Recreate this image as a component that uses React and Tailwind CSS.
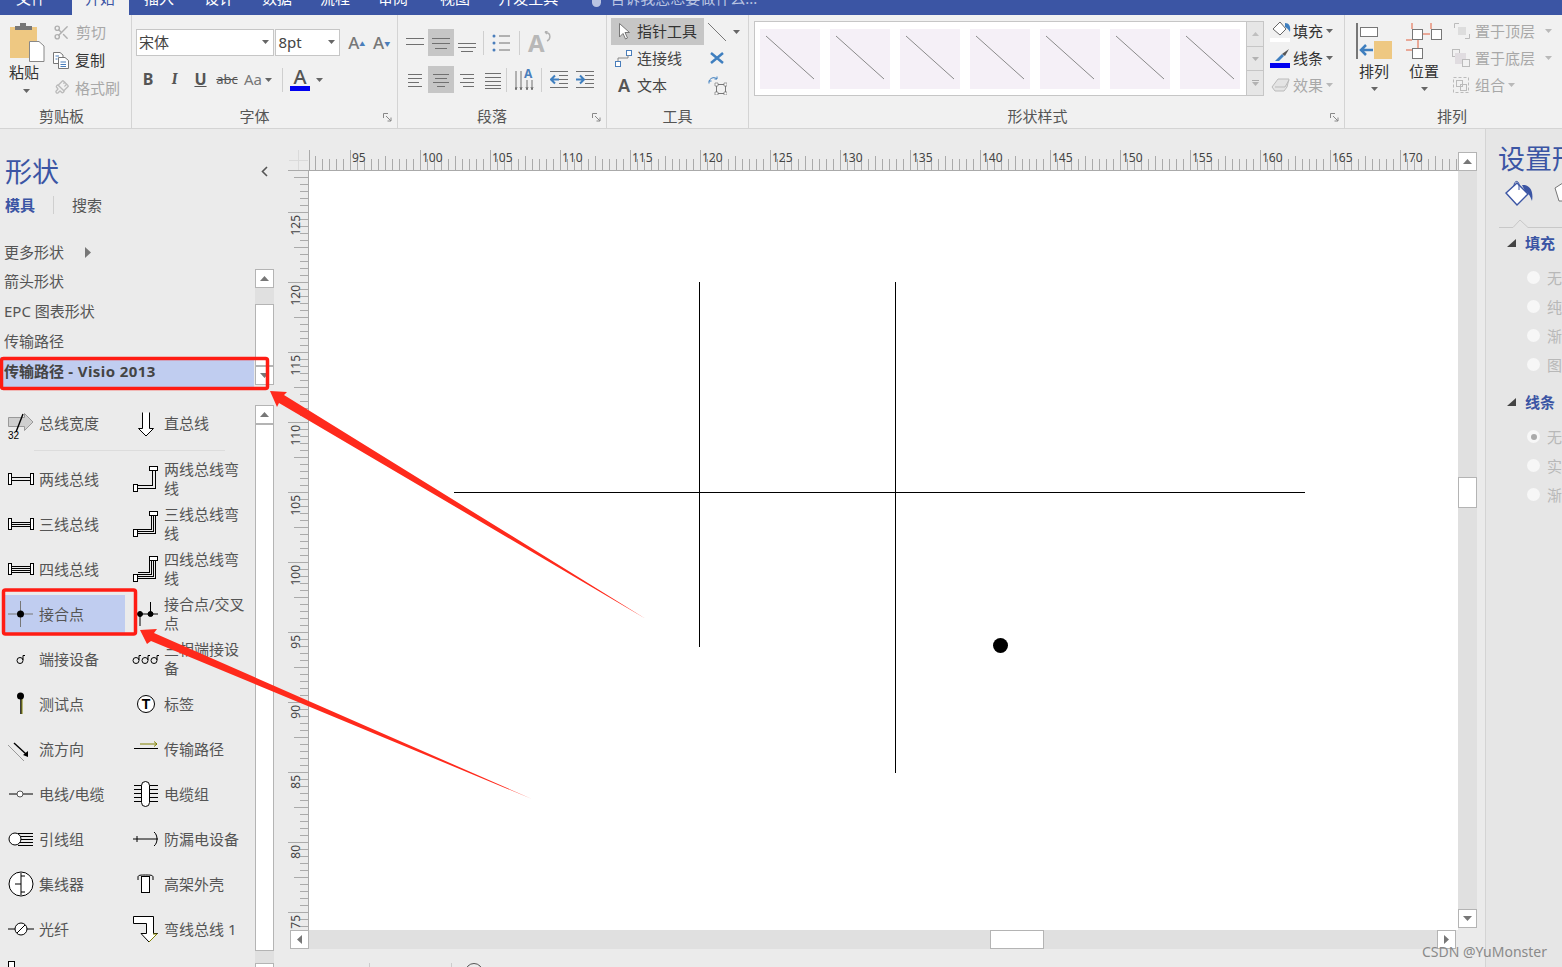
import { Scissors, PaintbrushVertical } from "lucide-react"

const tabs = [
  ["文件", "ml-[16px]"],
  ["开始", "ml-[26px] pl-[13px] pr-[14px] bg-[#f1f1f1] text-[#3b55a4]"],
  ["插入", "ml-[15px]"],
  ["设计", "ml-[30px]"],
  ["数据", "ml-[28px]"],
  ["流程", "ml-[28px]"],
  ["审阅", "ml-[28px]"],
  ["视图", "ml-[32px]"],
  ["开发工具", "ml-[28px]"],
]

const Caret = ({ className = "" }) => (
  <svg width="7" height="4" viewBox="0 0 7 4" className={className}>
    <path d="M0 0H7L3.5 4Z" fill="#666" />
  </svg>
)

const Launcher = () => (
  <svg width="9" height="9" viewBox="0 0 9 9" fill="none" stroke="#888">
    <path d="M0.5 5V0.5H5M3 3L8 8M8 4.5V8H4.5" />
  </svg>
)

// Ribbon group with its caption along the bottom
const Group = ({ w, label, labelCls = "", launcher, children }) => (
  <div className={`${w} h-full flex flex-col border-r border-[#d4d4d4] shrink-0`}>
    <div className="h-[84px]">{children}</div>
    <div className="mt-[5px] h-[24px] grid grid-cols-[1fr_auto_1fr] items-center text-[#555]">
      <div />
      <div className={labelCls}>{label}</div>
      <div className="flex justify-end pr-[5px] pt-[3px]">{launcher && <Launcher />}</div>
    </div>
  </div>
)

const Lines = ({ d, w = 18, h = 20, blue }) => (
  <svg width={w} height={h} viewBox={`0 0 ${w} ${h}`} fill="none" shapeRendering="crispEdges">
    <path d={d} stroke="#707070" />
    {blue && <path d={blue} stroke="#3f7fbf" strokeWidth="2" shapeRendering="auto" />}
  </svg>
)

const Cell = ({ w, on, children }) => (
  <div className={`${w} h-[27px] flex items-center justify-center shrink-0 ${on ? "bg-[#c6c6c6]" : ""}`}>{children}</div>
)

const VDiv = ({ m }) => <div className={`w-px h-[24px] bg-[#cfcfcf] shrink-0 ${m}`} />

const ClipboardGroup = () => (
  <Group w="w-[132px]" label="剪贴板" labelCls="mr-[8px]">
    <div className="flex pt-[3px]">
      <div className="w-[53px] pl-[9px] flex flex-col">
        <svg width="36" height="39" viewBox="0 0 36 39" className="mt-[5px]">
          <rect x="1" y="4" width="27" height="31" fill="#eec882" />
          <path d="M6 7V3H11V0H17V3H23V7Z" fill="#777" />
          <path d="M20.5 18.5H30L35 23V38.5H20.5Z" fill="#fff" stroke="#888" />
        </svg>
        <div className="mt-[1px] text-[#333]">粘贴</div>
        <Caret className="ml-[14px] mt-[8px]" />
      </div>
      <div className="flex flex-col">
        <div className="h-[28px] flex items-center gap-[6px] text-[#a8a8a8]">
          <Scissors size={17} color="#b0b0b0" />剪切
        </div>
        <div className="h-[28px] flex items-center gap-[6px]">
          <svg width="16" height="17" viewBox="0 0 16 17" fill="#fff" stroke="#777">
            <path d="M0.5 0.5H7L10 3V11.5H0.5Z" />
            <path d="M5.5 5.5H12L15.5 8.5V16.5H5.5Z" />
            <path d="M2.5 4H6M2.5 7H4.5M7.5 10H13M7.5 12.5H13M7.5 14.5H13" stroke="#4a7ebb" />
          </svg>
          <span className="text-[#333]">复制</span>
        </div>
        <div className="h-[28px] flex items-center gap-[6px] text-[#a8a8a8]">
          <PaintbrushVertical size={16} color="#bbb" className="rotate-45" />格式刷
        </div>
      </div>
    </div>
  </Group>
)

const FontGroup = () => (
  <Group w="w-[266px]" label="字体" labelCls="mr-[20px]" launcher>
    <div className="pt-[14px] pl-[4px]">
      <div className="flex items-center">
        <div className="w-[139px] h-[27px] pb-[2px] bg-white border border-[#c6c6c6] flex items-center justify-between pl-[2px] pr-[4px] text-[#444]">
          宋体<Caret />
        </div>
        <div className="ml-px w-[65px] h-[27px] pb-[2px] bg-white border border-[#c6c6c6] flex items-center justify-between pl-[2px] pr-[4px] text-[#444]">
          8pt<Caret />
        </div>
        <div className="ml-[8px] w-[25px] text-[17px] text-[#777] font-medium whitespace-nowrap">
          A<sup className="text-[6px] text-[#4a7ebb]">▲</sup>
        </div>
        <div className="w-[24px] text-[17px] text-[#777] font-medium whitespace-nowrap">
          A<sup className="text-[6px] text-[#4a7ebb]">▼</sup>
        </div>
      </div>
      <div className="flex items-center mt-[10px] -ml-px text-[#555]">
        <Cell w="w-[26px]"><b className="text-[16px] mb-[2px]">B</b></Cell>
        <Cell w="w-[27px]"><i className="text-[16px] mb-[2px] font-serif font-bold">I</i></Cell>
        <Cell w="w-[25px]"><b className="underline text-[16px] mb-[2px]">U</b></Cell>
        <Cell w="w-[28px]"><span className="line-through text-[13px] mb-[2px]">abc</span></Cell>
        <Cell w="w-[24px]"><span className="text-[#777] mb-[2px]">Aa</span></Cell>
        <Caret />
        <VDiv m="ml-[10px]" />
        <div className="ml-[7px] w-[20px] flex flex-col items-center">
          <span className="text-[20px] leading-[18px] font-medium text-[#555]">A</span>
          <div className="w-[20px] h-[5px] bg-[#0000f0]" />
        </div>
        <Caret className="ml-[6px]" />
      </div>
    </div>
  </Group>
)

const ParagraphGroup = () => (
  <Group w="w-[209px]" label="段落" labelCls="mr-[20px]" launcher>
    <div className="pt-[14px] pl-[4px]">
      <div className="flex items-center">
        <Cell w="w-[26px]"><Lines d="M0 5.5H18M0 11.5H18" /></Cell>
        <Cell w="w-[26px]" on><Lines d="M0 5.5H18M0 10.5H18M3 15.5H15" /></Cell>
        <Cell w="w-[26px]"><Lines d="M0 10.5H18M0 14.5H18M3 18.5H15" /></Cell>
        <VDiv m="ml-[3px]" />
        <div className="ml-[8px]">
          <svg width="19" height="20" viewBox="0 0 19 20">
            <circle cx="2" cy="3" r="1.5" fill="#4a7ebb" />
            <circle cx="2" cy="10" r="1.5" fill="#4a7ebb" />
            <circle cx="2" cy="17" r="1.5" fill="#4a7ebb" />
            <path d="M7 3H18M7 10H18M7 17H18" stroke="#707070" />
          </svg>
        </div>
        <VDiv m="ml-[8px]" />
        <div className="ml-[8px] flex items-start">
          <span className="text-[24px] leading-none font-bold text-[#b8b8b8]">A</span>
          <svg width="7" height="11" viewBox="0 0 7 11" fill="none" className="-ml-[1px]">
            <path d="M1 1L3 3M1 1L3.5 0M2 1.5C7 2 7 8 3 10" stroke="#b0b0b0" strokeWidth="1.4" />
          </svg>
        </div>
      </div>
      <div className="flex items-center mt-[10px]">
        <Cell w="w-[26px]"><Lines w={14} d="M0 4.5H14M0 8.5H14M0 12.5H11M0 16.5H14" /></Cell>
        <Cell w="w-[26px]" on><Lines w={16} d="M0 4.5H16M2 8.5H14M0 12.5H16M4 16.5H12" /></Cell>
        <Cell w="w-[26px]"><Lines w={14} d="M0 4.5H14M3 8.5H14M0 12.5H14M3 16.5H14" /></Cell>
        <Cell w="w-[26px]"><Lines w={16} d="M0 3.5H16M0 7.5H16M0 11.5H16M0 15.5H16M0 18.5H16" /></Cell>
        <VDiv m="" />
        <div className="ml-[8px]">
          <svg width="19" height="22" viewBox="0 0 19 22" fill="none">
            <path d="M1 2V20M6 2V20M12 11V20M17 11V20" stroke="#707070" />
            <path d="M0 18L1 21L2 18M5 18L6 21L7 18M11 18L12 21L13 18M16 18L17 21L18 18" stroke="#707070" />
            <text x="9" y="9" fontSize="12" fontWeight="700" fill="#4a7ebb" fontFamily="Noto Sans">A</text>
          </svg>
        </div>
        <VDiv m="ml-[7px]" />
        <div className="ml-[8px]">
          <Lines d="M0 1.5H18M9 5.5H18M9 9.5H18M9 13.5H18M0 17.5H18" blue="M9 9.5H1M5 5.5L1 9.5L5 13.5" />
        </div>
        <div className="ml-[8px]">
          <Lines d="M0 1.5H18M9 5.5H18M9 9.5H18M9 13.5H18M0 17.5H18" blue="M0 9.5H8M4 5.5L8 9.5L4 13.5" />
        </div>
      </div>
    </div>
  </Group>
)

const ToolsGroup = () => (
  <Group w="w-[142px]" label="工具">
    <div className="pt-[3px] pl-[4px]">
      <div className="flex items-center h-[27px]">
        <div className="w-[93px] h-[27px] bg-[#c6c6c6] flex items-center pl-[8px] gap-[7px]">
          <svg width="11" height="17" viewBox="0 0 11 17">
            <path d="M0.5 0.5V14L4 10.5L6.5 16L8.5 15L6 9.5H10.5Z" fill="#fff" stroke="#777" />
          </svg>
          <span className="text-[#333] mb-[2px]">指针工具</span>
        </div>
        <svg width="18" height="18" viewBox="0 0 18 18" className="ml-[4px]"><path d="M0 0L18 18" stroke="#777" /></svg>
        <Caret className="ml-[7px]" />
      </div>
      <div className="flex items-center h-[27px]">
        <div className="w-[93px] flex items-center pl-[4px] gap-[5px]">
          <svg width="17" height="17" viewBox="0 0 17 17" fill="#fff" stroke="#4a7ebb">
            <rect x="0.5" y="11.5" width="5" height="5" />
            <rect x="11.5" y="0.5" width="5" height="5" />
            <path d="M3 11V8H13V5" stroke="#888" fill="none" />
          </svg>
          <span className="text-[#444] mb-[2px]">连接线</span>
        </div>
        <svg width="14" height="12" viewBox="0 0 14 12" className="ml-[6px] mb-[2px]"><path d="M1 1L13 11M13 1L1 11" stroke="#3f7fbf" strokeWidth="2.5" /></svg>
      </div>
      <div className="flex items-center h-[27px]">
        <div className="w-[93px] flex items-center pl-[7px] gap-[7px]">
          <span className="text-[18px] font-semibold text-[#555] leading-none mb-[2px]">A</span>
          <span className="text-[#444] mb-[2px]">文本</span>
        </div>
        <svg width="19" height="19" viewBox="0 0 19 19" fill="none" className="ml-[4px]">
          <path d="M1 5C3 1 7 1 9 3M9 3V0.5M9 3H6.5M1 5V7.5M1 5H3.5" stroke="#3f7fbf" />
          <rect x="8.5" y="8.5" width="9" height="9" stroke="#777" />
          <path d="M7 7H10V10H7ZM16 7H19V10H16ZM7 16H10V19H7ZM16 16H19V19H16Z" fill="#fff" stroke="#777" strokeWidth="0.7" />
        </svg>
      </div>
    </div>
  </Group>
)

const Swatch = () => (
  <div className="w-[60px] h-[60px] bg-[#f5f0f7] shrink-0">
    <svg width="60" height="60" viewBox="0 0 60 60"><path d="M6 7L54 50" stroke="#8a8a8a" /></svg>
  </div>
)

const StylesGroup = () => (
  <Group w="w-[596px]" label="形状样式" labelCls="mr-[18px]" launcher>
    <div className="flex pt-[3px] pl-[5px]">
      <div className="mt-[3px] w-[493px] h-[75px] bg-white border border-[#c6c6c6] flex items-center gap-[10px] pl-[5px] overflow-hidden">
        {[0, 1, 2, 3, 4, 5, 6].map((i) => <Swatch key={i} />)}
      </div>
      <div className="mt-[3px] w-[17px] h-[75px] flex flex-col border border-l-0 border-[#c6c6c6] bg-[#e6e6e6] items-center">
        <div className="h-[25px] w-full flex items-center justify-center border-b border-[#c6c6c6]"><Caret className="rotate-180 opacity-30" /></div>
        <div className="h-[24px] w-full flex items-center justify-center border-b border-[#c6c6c6]"><Caret className="opacity-40" /></div>
        <div className="flex-1 w-full flex flex-col items-center justify-center gap-px"><div className="w-[7px] h-px bg-[#aaa]" /><Caret className="opacity-40" /></div>
      </div>
      <div className="ml-[6px] flex flex-col">
        <div className="h-[27px] pb-[2px] flex items-center">
          <svg width="21" height="22" viewBox="0 0 21 22" fill="none">
            <rect x="0" y="18" width="20" height="4" fill="#fff" />
            <path d="M3 9L10 2L16 9L10 15Z" fill="#fff" stroke="#666" />
            <path d="M15 3C19 3 21 6 20 12C18 9 17 8 15 7Z" fill="#3f7fbf" />
          </svg>
          <span className="ml-[2px] text-[#333]">填充</span><Caret className="ml-[3px]" />
        </div>
        <div className="h-[27px] pb-[2px] flex items-center">
          <svg width="21" height="20" viewBox="0 0 21 20">
            <path d="M5 13L12 6L14 8L9 13Z" fill="#3f7fbf" />
            <path d="M12 6L19 1L15 8Z" fill="#555" />
            <rect x="0" y="15" width="20" height="5" fill="#0000f0" />
          </svg>
          <span className="ml-[2px] text-[#333]">线条</span><Caret className="ml-[3px]" />
        </div>
        <div className="h-[27px] pb-[2px] flex items-center text-[#a8a8a8]">
          <svg width="21" height="16" viewBox="0 0 21 16">
            <path d="M2 10L8 2H19L17 10L14 14H5Z" fill="#e4e4e4" stroke="#bbb" />
            <path d="M5 10H15L19 3" fill="none" stroke="#bbb" />
          </svg>
          <span className="ml-[2px]">效果</span><Caret className="ml-[3px] opacity-40" />
        </div>
      </div>
    </div>
  </Group>
)

const ArrangeRow = ({ icon, text, w = "w-[70px]" }) => (
  <div className="h-[27px] pb-[2px] flex items-center text-[#a8a8a8]">
    <div className="w-[23px] shrink-0">{icon}</div>
    <span className={w}>{text}</span>
    <Caret className="opacity-40" />
  </div>
)

const ArrangeGroup = () => (
  <div className="w-[217px] h-full flex flex-col shrink-0">
    <div className="h-[84px] flex pt-[3px]">
      <div className="ml-[2px] w-[54px] flex flex-col items-center">
        <svg width="36" height="37" viewBox="0 0 36 37" className="mt-[5px]">
          <rect x="0" y="0" width="2" height="36" fill="#777" />
          <rect x="4.5" y="4.5" width="17" height="9" fill="#fff" stroke="#777" />
          <rect x="18" y="18" width="18" height="18" fill="#eec882" />
          <path d="M17 27H6M10 22L5 27L10 32" stroke="#3f7fbf" strokeWidth="2.5" fill="none" />
        </svg>
        <div className="mt-[2px] text-[#333]">排列</div>
        <Caret className="mt-[7px]" />
      </div>
      <div className="w-[46px] flex flex-col items-center">
        <svg width="36" height="37" viewBox="0 0 36 37" className="mt-[5px]" fill="#fff">
          <path d="M6 0V6M25 0V6M0 17H6M0 27H6M12 17V27M17 11H24" stroke="#e2603f" fill="none" />
          <rect x="6.5" y="6.5" width="10" height="10" stroke="#777" />
          <rect x="25.5" y="6.5" width="10" height="10" stroke="#777" />
          <rect x="6.5" y="25.5" width="10" height="10" stroke="#777" />
        </svg>
        <div className="mt-[2px] text-[#333]">位置</div>
        <Caret className="mt-[7px]" />
      </div>
      <div className="ml-[5px] flex flex-col">
        <ArrangeRow
          text="置于顶层"
          icon={
            <svg width="16" height="16" viewBox="0 0 16 16" fill="none" className="ml-[2px]">
              <path d="M5 0.5H0.5V5M11 15.5H15.5V11" stroke="#bbb" />
              <rect x="4" y="4" width="8" height="8" fill="#ddd" />
            </svg>
          }
        />
        <ArrangeRow
          text="置于底层"
          icon={
            <svg width="18" height="18" viewBox="0 0 18 18" fill="none">
              <rect x="0.5" y="0.5" width="7" height="7" stroke="#bbb" />
              <rect x="3" y="4" width="11" height="11" fill="#e0dce0" />
              <rect x="10.5" y="10.5" width="7" height="7" fill="#f1f1f1" stroke="#bbb" />
            </svg>
          }
        />
        <ArrangeRow
          text="组合"
          w="w-[33px]"
          icon={
            <svg width="18" height="18" viewBox="0 0 18 18" fill="none" stroke="#bbb">
              <rect x="1.5" y="1.5" width="15" height="15" strokeDasharray="3 2" />
              <rect x="4.5" y="4.5" width="6" height="6" />
              <rect x="8.5" y="8.5" width="6" height="6" />
            </svg>
          }
        />
      </div>
    </div>
    <div className="mt-[5px] h-[24px] flex items-center pl-[92px] text-[#555]">排列</div>
  </div>
)

const Ribbon = () => (
  <div className="h-[114px] bg-[#f1f1f1] border-b border-[#d4d4d4] flex shrink-0">
    <ClipboardGroup />
    <FontGroup />
    <ParagraphGroup />
    <ToolsGroup />
    <StylesGroup />
    <ArrangeGroup />
  </div>
)

const ScrollBtn = ({ up, className = "" }) => (
  <div className={`h-[19px] w-[19px] bg-white border border-[#b4b4b4] flex items-center justify-center shrink-0 ${className}`}>
    <svg width="9" height="5" viewBox="0 0 9 5" className={up ? "" : "rotate-180"}>
      <path d="M0 5H9L4.5 0Z" fill="#777" />
    </svg>
  </div>
)

const bus = (n) => {
  const gap = n === 2 ? 3 : 2
  const top = Math.floor(13 - ((n - 1) * gap) / 2) + 0.5
  return (
    <g fill="#fff" stroke="#000" shapeRendering="crispEdges">
      {Array.from({ length: n }, (_, i) => (
        <path key={i} d={`M3 ${top + i * gap}H23`} fill="none" />
      ))}
      <rect x="0.5" y="7.5" width="3" height="11" />
      <rect x="22.5" y="7.5" width="3" height="11" />
    </g>
  )
}

const busElbow = (n) => {
  const gap = n === 2 ? 3 : 2
  return (
    <g fill="#fff" stroke="#000" shapeRendering="crispEdges">
      {Array.from({ length: n }, (_, i) => {
        const d = i * gap
        return <path key={i} d={`M5 ${22.5 - d}H${22.5 - d}V4`} fill="none" />
      })}
      <rect x="0.5" y="18.5" width="4" height="7" />
      <rect x="16.5" y="0.5" width="8" height="4" />
    </g>
  )
}

const termCircle = (x) => (
  <g key={x} fill="none" stroke="#000">
    <circle cx={x} cy="14.5" r="3" />
    <path d={`M${x + 3} 14V9.5H${x + 5}`} />
  </g>
)

const stencilIcons = {
  width: (
    <g>
      <path d="M0.5 6.5H16.5V2.5L25 11L16.5 19.5V15.5H0.5Z" fill="#cfcfcf" stroke="#999" />
      <path d="M15 3L8 21" stroke="#000" strokeWidth="1.4" />
      <text x="0" y="28" fontSize="10" fontFamily="Liberation Sans" fill="#000">32</text>
    </g>
  ),
  down: <path d="M9.5 1.5V17.5H5.5L13 25L20.5 17.5H16.5V1.5" fill="#fff" stroke="#000" />,
  junction: (
    <g>
      <path d="M0 13H25M12.5 0V26" stroke="#777" />
      <circle cx="12.5" cy="13" r="3.5" fill="#000" />
    </g>
  ),
  cross: (
    <g stroke="#000">
      <path d="M4 13H25M7 13V25M17.5 1V13" />
      <circle cx="7" cy="13" r="2.5" fill="#000" />
      <circle cx="17.5" cy="13" r="2.5" fill="#000" />
    </g>
  ),
  term: termCircle(12),
  term3: <g>{termCircle(3)}{termCircle(12)}{termCircle(21)}</g>,
  test: (
    <g>
      <path d="M13 5V23" stroke="#000" strokeWidth="1.5" />
      <path d="M14 8V23" stroke="#808000" />
      <circle cx="12.5" cy="5" r="3.5" fill="#000" />
    </g>
  ),
  tag: (
    <g>
      <circle cx="13" cy="13" r="8.5" fill="#fff" stroke="#000" />
      <text x="13" y="18" textAnchor="middle" fontSize="14" fontWeight="700" fontFamily="Liberation Sans" fill="#000">T</text>
    </g>
  ),
  flow: (
    <g>
      <path d="M0 9L16 25" stroke="#999" />
      <path d="M6 7L18 18" stroke="#000" strokeWidth="1.4" />
      <path d="M20 21L15 19L20 15Z" fill="#000" />
    </g>
  ),
  path: (
    <g fill="none">
      <path d="M1 12.5H25" stroke="#000" />
      <path d="M7 8H24M21 5.5L24 8L21 10.5" stroke="#808000" />
    </g>
  ),
  wire: (
    <g fill="#fff" stroke="#000">
      <path d="M1 13H25" />
      <circle cx="12" cy="13" r="3" stroke="#555" />
    </g>
  ),
  cable: (
    <g stroke="#000" shapeRendering="crispEdges">
      <path d="M1 4.5H25M1 8.5H25M1 12.5H25M1 16.5H25M1 20.5H25" />
      <rect x="8.5" y="0.5" width="8" height="25" rx="4" fill="#fff" shapeRendering="auto" />
    </g>
  ),
  leader: (
    <g stroke="#000">
      <path d="M10 7.5H25M10 10.5H25M10 13.5H25M10 16.5H25M10 19.5H25" shapeRendering="crispEdges" />
      <circle cx="7" cy="13" r="6" fill="#fff" />
    </g>
  ),
  gfci: (
    <g fill="none" stroke="#000">
      <path d="M0 13H25M4 10V16" />
      <path d="M21 6C25 9 25 17 21 20" />
    </g>
  ),
  hub: (
    <g fill="#fff" stroke="#000">
      <circle cx="13" cy="13" r="12" />
      <path d="M13 2V24M13 5H17M13 21H17M7 13H13" fill="none" />
    </g>
  ),
  housing: (
    <g fill="#fff" stroke="#000">
      <rect x="8.5" y="5.5" width="8" height="16" />
      <path d="M5 9V6C5 4 8 4 12.5 4S20 4 20 6V9" fill="none" />
    </g>
  ),
  fiber: (
    <g fill="#fff" stroke="#000">
      <path d="M0 13H26" />
      <circle cx="13" cy="13" r="6" />
      <path d="M9 17L17 9" />
    </g>
  ),
  elbowArrow: (
    <g>
      <path d="M0.5 0.5H20.5V17.5H24.5L16 26L8 17.5H13.5V7.5H0.5Z" fill="#fff" stroke="#000" />
      <path d="M20 18H24L16 26" fill="none" stroke="#808000" />
    </g>
  ),
}

// third field of a row: true when the right-hand label wraps to two lines
const stencil = [
  ["两线总线", bus(2), "两线总线弯线", busElbow(2), true],
  ["三线总线", bus(3), "三线总线弯线", busElbow(3), true],
  ["四线总线", bus(4), "四线总线弯线", busElbow(4), true],
  ["接合点", stencilIcons.junction, "接合点/交叉点", stencilIcons.cross, true],
  ["端接设备", stencilIcons.term, "三相端接设备", stencilIcons.term3, true],
  ["测试点", stencilIcons.test, "标签", stencilIcons.tag],
  ["流方向", stencilIcons.flow, "传输路径", stencilIcons.path],
  ["电线/电缆", stencilIcons.wire, "电缆组", stencilIcons.cable],
  ["引线组", stencilIcons.leader, "防漏电设备", stencilIcons.gfci],
  ["集线器", stencilIcons.hub, "高架外壳", stencilIcons.housing],
  ["光纤", stencilIcons.fiber, "弯线总线 1", stencilIcons.elbowArrow],
]

const StencilItem = ({ icon, text, selected, right, textCls = "" }) => (
  <div className={`h-[45px] flex items-center ${right ? "w-[129px]" : "w-[125px]"}`}>
    <div className={`h-[38px] ml-[5px] pl-[3px] flex items-center ${selected ? "w-[121px] bg-[#c0cdf0]" : "w-full"}`}>
      <svg width="26" height="26" viewBox="0 0 26 26" className="shrink-0 overflow-visible">{icon}</svg>
      <span className={`ml-[5px] w-[82px] text-[#555] ${textCls}`}>{text}</span>
    </div>
  </div>
)

const ShapesPanel = () => (
  <div className="w-[288px] shrink-0 overflow-hidden">
    <div className="mt-[27px] h-[30px] pl-[5px] pr-[18px] flex items-center justify-between">
      <span className="text-[27px] text-[#3b55a4] leading-none">形状</span>
      <svg width="7" height="11" viewBox="0 0 7 11" fill="none" className="mr-[2px]"><path d="M6 1L1.5 5.5L6 10" stroke="#555" strokeWidth="1.6" /></svg>
    </div>
    <div className="mt-[9px] h-[20px] flex items-center pl-[5px]">
      <b className="font-semibold text-[#3b55a4]">模具</b>
      <div className="w-px h-[18px] bg-[#cfcfcf] ml-[18px]" />
      <span className="ml-[18px] text-[#555]">搜索</span>
    </div>
    <div className="mt-[22px] h-[30px] flex items-center pl-[4px] text-[#555]">
      更多形状
      <svg width="6" height="11" viewBox="0 0 6 11" className="ml-[21px] mt-px"><path d="M0 0L6 5.5L0 11Z" fill="#777" /></svg>
    </div>
    <div className="flex">
      <div className="w-[254px] text-[#555]">
        <div className="h-[30px] pb-[2px] flex items-center pl-[4px]">箭头形状</div>
        <div className="h-[30px] pb-[2px] flex items-center pl-[4px]">EPC 图表形状</div>
        <div className="h-[30px] pb-[2px] flex items-center pl-[4px]">传输路径</div>
        <div className="h-[30px] pb-[2px] flex items-center pl-[4px] bg-[#c0cdf0] font-bold text-[#444] whitespace-pre">
          传输路径<span className="tracking-[0.4px]"> - Visio 2013</span>
        </div>
      </div>
      <div className="ml-[1px] pt-[2px] w-[19px] flex flex-col h-[120px]">
        <ScrollBtn up />
        <div className="h-[16px] bg-[#e0e0e0]" />
        <div className="h-[62px] bg-white border border-[#b4b4b4]" />
        <ScrollBtn />
      </div>
    </div>
    <div className="mt-[14px] flex">
      <div className="w-[254px]">
        <div className="flex">
          <StencilItem icon={stencilIcons.width} text="总线宽度" textCls="mb-[2px]" />
          <StencilItem icon={stencilIcons.down} text="直总线" textCls="mb-[2px]" right />
        </div>
        <div className="h-[10px] pt-[4px] pl-[34px]"><div className="w-[191px] h-px bg-[#dcdcdc]" /></div>
        {stencil.map(([a, ai, b, bi, wraps]) => (
          <div className="flex leading-[19px]" key={a}>
            <StencilItem icon={ai} text={a} selected={a === "接合点"} textCls="mt-[2px]" />
            <StencilItem icon={bi} text={b} right textCls={wraps ? "" : "mt-[2px]"} />
          </div>
        ))}
        <div className="h-[45px] pl-[8px] pt-[10px]"><div className="w-[7px] h-[10px] border border-black bg-white" /></div>
      </div>
      <div className="ml-[1px] pt-[4px] w-[19px] flex flex-col">
        <ScrollBtn up />
        <div className="h-[527px] bg-white border border-[#b4b4b4]" />
        <div className="h-[12px] bg-[#e0e0e0]" />
        <div className="h-[19px] bg-white border border-[#b4b4b4]" />
      </div>
    </div>
  </div>
)

const majors = Array.from({ length: 16 }, (_, i) => 350 + i * 70)
const ticksH = Array.from({ length: 165 }, (_, i) => 315 + i * 7)
const ticksV = Array.from({ length: 110 }, (_, i) => 177 + i * 7)
const vMajors = Array.from({ length: 11 }, (_, i) => 212 + i * 70)

const TopRuler = () => (
  <svg width="1149" height="24" viewBox="309 147 1149 24" className="block">
    {ticksH.map((x) => {
      const off = (x - 350 + 700) % 70
      const top = off === 0 ? 150 : off === 35 ? 156 : 159
      return <path key={x} d={`M${x + 0.5} ${top}V171`} stroke="#aaa" shapeRendering="crispEdges" />
    })}
    <path d="M309.5 150V171M309 170.5H1458" stroke="#aaa" shapeRendering="crispEdges" />
    {majors.map((x, i) => (
      <text key={x} x={x + 2} y="162" fontSize="12" fill="#444" fontFamily="Noto Sans">{95 + i * 5}</text>
    ))}
  </svg>
)

const LeftRuler = () => (
  <svg width="21" height="759" viewBox="288 171 21 759" className="block">
    {ticksV.map((y) => {
      const off = (y - 212 + 700) % 70
      const left = off === 0 ? 288 : off === 35 ? 294 : 300
      return <path key={y} d={`M${left} ${y + 0.5}H308`} stroke="#aaa" shapeRendering="crispEdges" />
    })}
    <path d="M308.5 171V930" stroke="#aaa" shapeRendering="crispEdges" />
    {vMajors.map((y, i) => (
      <text key={y} x="300" y={y + 3} fontSize="12" fill="#444" fontFamily="Noto Sans" textAnchor="end" transform={`rotate(-90 300 ${y + 3})`}>
        {125 - i * 5}
      </text>
    ))}
  </svg>
)

const Drawing = () => (
  <svg width="1149" height="759" viewBox="309 171 1149 759" className="block">
    <path d="M699.5 282V647M895.5 282V773M454 492.5H1305" stroke="#000" fill="none" shapeRendering="crispEdges" />
    <circle cx="1000.5" cy="645.5" r="7.5" fill="#000" />
  </svg>
)

const CanvasArea = () => (
  <div className="w-[1197px] shrink-0 flex flex-col pt-[18px]">
    <div className="flex h-[783px]">
      <div className="w-[1170px] flex flex-col">
        <div className="flex h-[24px]">
          <svg width="21" height="24" viewBox="288 147 21 24" className="block shrink-0">
            <path d="M298.5 150V170M289 160.5H308" stroke="#dadada" shapeRendering="crispEdges" />
            <path d="M288 170.5H309" stroke="#aaa" shapeRendering="crispEdges" />
          </svg>
          <TopRuler />
        </div>
        <div className="flex">
          <LeftRuler />
          <div className="bg-white w-[1149px] h-[759px]"><Drawing /></div>
        </div>
      </div>
      <div className="w-[19px] flex flex-col">
        <ScrollBtn up className="mt-[5px]" />
        <div className="h-[306px] bg-[#e0e0e0]" />
        <div className="h-[31px] bg-white border border-[#b4b4b4]" />
        <div className="h-[401px] bg-[#e0e0e0]" />
        <ScrollBtn />
      </div>
    </div>
    <div className="flex h-[19px] pl-[2px]">
      <ScrollBtn up className="-rotate-90" />
      <div className="w-[681px] bg-[#e0e0e0]" />
      <div className="w-[54px] bg-white border border-[#b4b4b4]" />
      <div className="w-[393px] bg-[#e0e0e0]" />
      <ScrollBtn className="-rotate-90" />
    </div>
    <div className="flex h-[18px] pl-[81px] pt-[14px]">
      <div className="w-px h-[4px] bg-[#ccc]" />
      <div className="w-px h-[4px] bg-[#ccc] ml-[81px]" />
      <div className="w-[18px] h-[18px] rounded-full border border-[#555] ml-[13px]" />
    </div>
  </div>
)

const Radio = ({ text, on }) => (
  <div className="h-[29px] flex items-center pl-[41px] whitespace-nowrap text-[#b8b8b8]">
    <div className="w-[13px] h-[13px] rounded-full bg-[#f7f7f7] flex items-center justify-center shrink-0">
      {on && <div className="w-[6px] h-[6px] rounded-full bg-[#aaa]" />}
    </div>
    <span className="ml-[7px]">{text}</span>
  </div>
)

const SectionHead = ({ text }) => (
  <div className="h-[20px] flex items-center pl-[21px]">
    <svg width="9" height="8" viewBox="0 0 9 8"><path d="M9 0V8H0Z" fill="#444" /></svg>
    <b className="ml-[9px] font-semibold text-[#3b55a4] whitespace-nowrap">{text}</b>
  </div>
)

const FormatPanel = () => (
  <div className="flex-1 bg-[#e6e6e6] border-l border-[#d4d4d4] overflow-hidden">
    <div className="mt-[15px] h-[30px] pl-[12px] text-[27px] leading-[30px] text-[#3b55a4] whitespace-nowrap">设置形状格式</div>
    <div className="mt-[6px] h-[28px] pl-[19px] flex items-start gap-[20px]">
      <svg width="29" height="27" viewBox="0 0 29 27" className="shrink-0" fill="none">
        <path d="M1 13L12 3L23 14L12 25Z" fill="#fff" stroke="#3b55a4" strokeWidth="1.4" />
        <path d="M9 6C9 0 14 0 14 5V10" stroke="#3b55a4" />
        <path d="M17 5C24 4 29 10 27 21C25 15 23 13 20 11Z" fill="#3b55a4" />
      </svg>
      <svg width="24" height="26" viewBox="0 0 24 26" className="shrink-0" fill="#fff" stroke="#777">
        <path d="M1 8L12 1L23 8L19 21H5Z" />
      </svg>
    </div>
    <svg width="77" height="12" viewBox="0 0 77 12" fill="none" className="block mt-[9px] ml-[13px]">
      <path d="M0 10.5H14L21 3L29 10.5H64" stroke="#c8c8c8" />
    </svg>
    <div className="mt-[4px]"><SectionHead text="填充" /></div>
    <div className="mt-[10px]">
      <Radio text="无填充" />
      <Radio text="纯色填充" />
      <Radio text="渐变填充" />
      <Radio text="图案填充" />
    </div>
    <div className="mt-[13px]"><SectionHead text="线条" /></div>
    <div className="mt-[10px]">
      <Radio text="无线条" on />
      <Radio text="实线" />
      <Radio text="渐变线" />
    </div>
  </div>
)

const Annotations = () => (
  <svg width="1562" height="967" viewBox="0 0 1562 967" className="absolute inset-0 pointer-events-none">
    <g fill="none" stroke="#ff1c14" strokeWidth="3.5">
      <rect x="1.5" y="358.5" width="266" height="30" rx="2" />
      <rect x="3.5" y="590" width="132" height="44" rx="2" />
    </g>
    <g fill="#ff2a1c">
      <path d="M270 391L287 392L284 395L646 619L279 403L277 407Z" />
      <path d="M140 630L157 629L154 633L532 799L151 641L147 644Z" />
    </g>
  </svg>
)

export default function App() {
  return (
    <div className="relative w-[1562px] h-[967px] overflow-hidden flex flex-col bg-[#ebebeb] text-[15px] leading-[18px] text-[#444] font-['Noto_Sans','Noto_Sans_CJK_SC',sans-serif]">
      {/* title/tab strip, cut off by the top of the shot */}
      <div className="h-[15px] bg-[#3b55a4] flex text-white overflow-hidden shrink-0">
        {tabs.map(([t, cls]) => (
          <div key={t} className={`h-[15px] ${cls}`}>
            <div className="-mt-[11px]">{t}</div>
          </div>
        ))}
        <div className="ml-[34px] w-[9px] h-[7px] rounded-b-full bg-[#b9c4e2]" />
        <div className="ml-[9px] -mt-[11px] text-[#b9c4e2]">告诉我您想要做什么...</div>
      </div>
      <Ribbon />
      <div className="flex flex-1 min-h-0">
        <ShapesPanel />
        <CanvasArea />
        <FormatPanel />
      </div>
      <Annotations />
      <div className="absolute left-[1422px] top-[943px] text-[14px] text-[#8a8a8a] whitespace-nowrap">CSDN @YuMonster</div>
    </div>
  )
}
